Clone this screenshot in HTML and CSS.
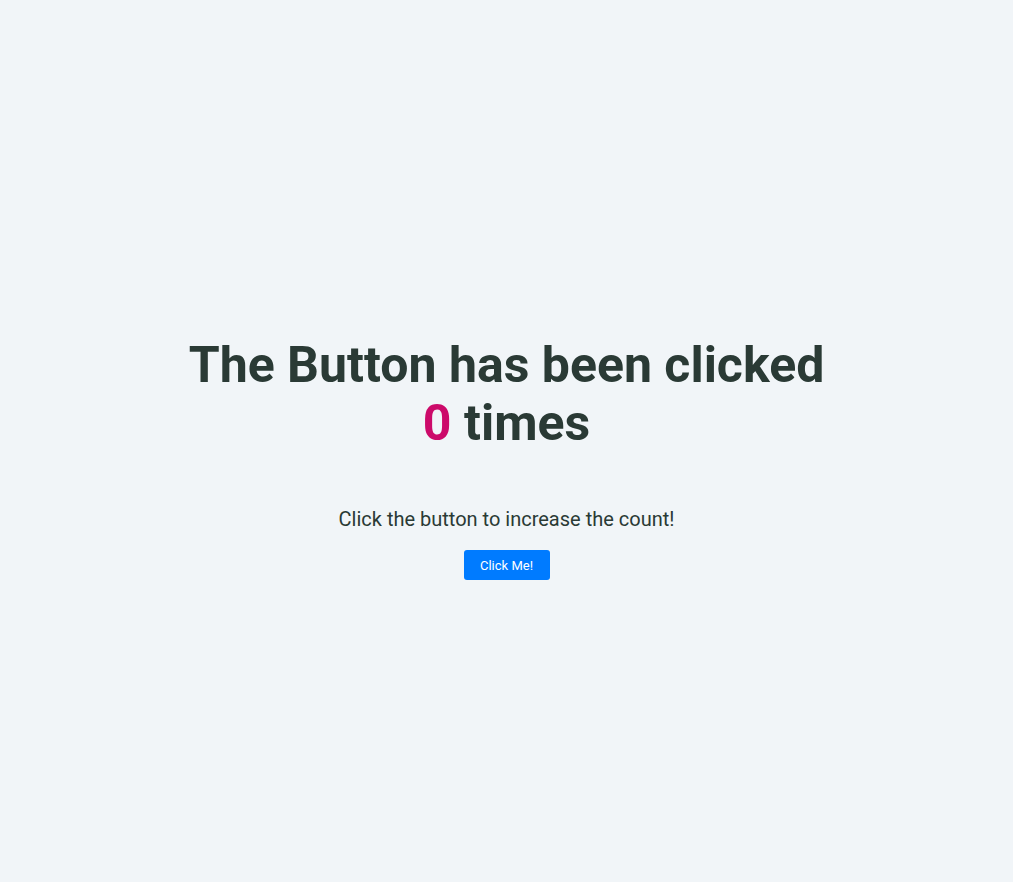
FILE: index.html
```html
<!DOCTYPE html>
<html>
<head>
<meta charset="utf-8">
<link rel="stylesheet" href="styles.css">
</head>
<body>
<main class="page">
  <h1 class="title">The Button has been clicked<br><span class="count">0</span> times</h1>
  <p class="hint">Click the button to increase the count!</p>
  <button class="btn">Click Me!</button>
</main>
</body>
</html>
```
FILE: styles.css
```css
html, body {
  margin: 0;
  padding: 0;
  background: #f1f5f8;
}
.page {
  box-sizing: border-box;
  min-height: 882px;
  padding-top: 34px;
  display: flex;
  flex-direction: column;
  align-items: center;
  justify-content: center;
  font-family: Roboto, "Liberation Sans", sans-serif;
  color: #2a3a35;
  text-align: center;
}
.title {
  margin: 0;
  font-size: 50px;
  font-weight: 700;
  line-height: 58px;
}
.count {
  color: #cc0a6a;
}
.hint {
  margin: 52px 0 16px;
  font-size: 20px;
  line-height: 30px;
}
.btn {
  font-family: Roboto, "Liberation Sans", sans-serif;
  font-size: 13px;
  color: #fff;
  background: #007bff;
  border: none;
  border-radius: 3px;
  width: 86px;
  height: 30px;
  padding: 0;
}
```
